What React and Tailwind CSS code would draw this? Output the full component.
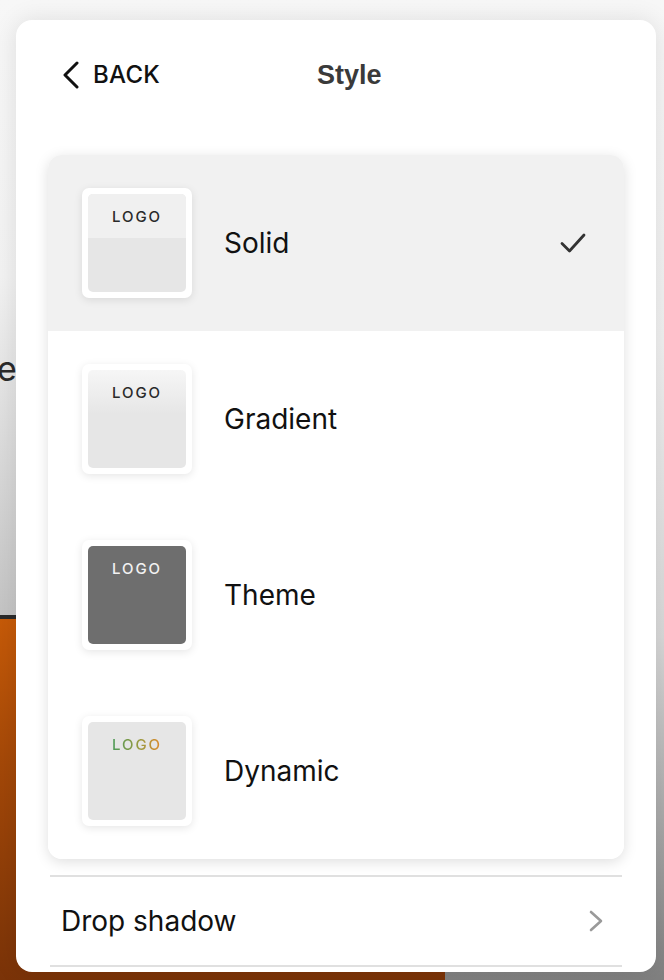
import React from "react";

function Thumb({ variant }) {
  let inner = null;
  const logoCls = "text-[15px] font-medium leading-none tracking-[0.13em]";
  if (variant === "solid") {
    inner = (
      <div className="flex h-[98px] w-[98px] flex-col overflow-hidden rounded-[5px] bg-[#e6e6e6]">
        <div className="flex h-[44px] items-start justify-center bg-[#f0f0f0] pt-[15px]">
          <span className={`${logoCls} text-[#2a2a2a]`}>LOGO</span>
        </div>
      </div>
    );
  } else if (variant === "gradient") {
    inner = (
      <div className="flex h-[98px] w-[98px] justify-center overflow-hidden rounded-[5px] bg-[linear-gradient(180deg,#f6f6f6_0%,#e6e6e6_45%,#e6e6e6_100%)] pt-[15px]">
        <span className={`${logoCls} text-[#2a2a2a]`}>LOGO</span>
      </div>
    );
  } else if (variant === "theme") {
    inner = (
      <div className="flex h-[98px] w-[98px] justify-center overflow-hidden rounded-[5px] bg-[#6e6e6e] pt-[15px]">
        <span className={`${logoCls} text-[#f2f2f2]`}>LOGO</span>
      </div>
    );
  } else {
    inner = (
      <div className="flex h-[98px] w-[98px] justify-center overflow-hidden rounded-[5px] bg-[#e6e6e6] pt-[15px]">
        <span className={`${logoCls} bg-[linear-gradient(90deg,#4c9a58_0%,#9a9a40_55%,#e0882a_100%)] bg-clip-text text-transparent`}>
          LOGO
        </span>
      </div>
    );
  }
  return (
    <div className="flex h-[110px] w-[110px] shrink-0 items-center justify-center rounded-[7px] bg-white shadow-[0_2px_8px_rgba(0,0,0,0.10)]">
      {inner}
    </div>
  );
}

function Row({ variant, label, selected }) {
  return (
    <div className={`flex h-[176px] items-center pl-[34px] pr-[38px] ${selected ? "bg-[#f1f1f1]" : "bg-white"}`}>
      <Thumb variant={variant} />
      <span className="ml-[32px] flex-1 text-[28px] leading-none text-[#111]">{label}</span>
      {selected && (
        <svg width="26" height="22" viewBox="0 0 26 22" fill="none">
          <path d="M2 11.5 L9.5 19 L24 3" stroke="#333" strokeWidth="2.8" strokeLinecap="round" strokeLinejoin="round" />
        </svg>
      )}
    </div>
  );
}

export default function App() {
  return (
    <div className="relative h-[980px] w-[664px] overflow-hidden bg-[#f5f5f5] font-['Inter',sans-serif]">
      {/* backdrop page under the modal */}
      <div className="absolute inset-0 flex">
        <div className="flex w-[445px] flex-col">
          <div className="h-[615px] bg-[linear-gradient(180deg,#f7f7f7_0%,#f2f2f2_45%,#c4c4c4_100%)] pt-[352px]">
            <span className="-ml-[3px] block text-[34px] leading-none text-[#2a2a2a]">e</span>
          </div>
          <div className="h-[4px] bg-[#2b2b2b]" />
          <div className="flex-1 bg-[linear-gradient(180deg,#c65a08_0%,#a44808_40%,#7a3308_100%)]" />
        </div>
        <div className="flex-1 bg-[linear-gradient(180deg,#f7f7f7_0%,#f0f0f0_35%,#d8d8d8_65%,#808080_100%)]" />
      </div>

      {/* modal panel */}
      <div className="relative ml-[16px] mt-[20px] flex h-[952px] w-[640px] flex-col rounded-[16px] bg-white pt-[20px] shadow-[0_0_24px_rgba(0,0,0,0.10)]">
        <div className="flex h-[70px] items-center pl-[46px]">
          <div className="flex w-[255px] items-center">
            <svg width="18" height="28" viewBox="0 0 18 28" fill="none">
              <path d="M15 2 L3 14 L15 26" stroke="#111" strokeWidth="3" strokeLinecap="round" strokeLinejoin="round" />
            </svg>
            <span className="ml-[13px] text-[24px] font-medium leading-none tracking-[0.01em] text-[#111]">BACK</span>
          </div>
          <span className="font-['Liberation_Sans',sans-serif] text-[27px] font-bold leading-none text-[#3a3a3a]">Style</span>
        </div>

        <div className="mx-[32px] mt-[45px] overflow-hidden rounded-[14px] bg-white shadow-[0_3px_14px_rgba(0,0,0,0.13)]">
          <Row variant="solid" label="Solid" selected />
          <Row variant="gradient" label="Gradient" />
          <Row variant="theme" label="Theme" />
          <Row variant="dynamic" label="Dynamic" />
        </div>

        <div className="mx-[34px] mt-[16px] flex flex-col">
          <div className="h-[2px] bg-[#e0e0e0]" />
          <div className="flex h-[88px] items-center justify-between pl-[11px] pr-[18px]">
            <span className="text-[28px] leading-none text-[#111]">Drop shadow</span>
            <svg width="16" height="22" viewBox="0 0 16 22" fill="none">
              <path d="M3 2 L13 11 L3 20" stroke="#9a9a9a" strokeWidth="2.6" strokeLinecap="round" strokeLinejoin="round" />
            </svg>
          </div>
          <div className="h-[2px] bg-[#e0e0e0]" />
        </div>
      </div>
    </div>
  );
}
